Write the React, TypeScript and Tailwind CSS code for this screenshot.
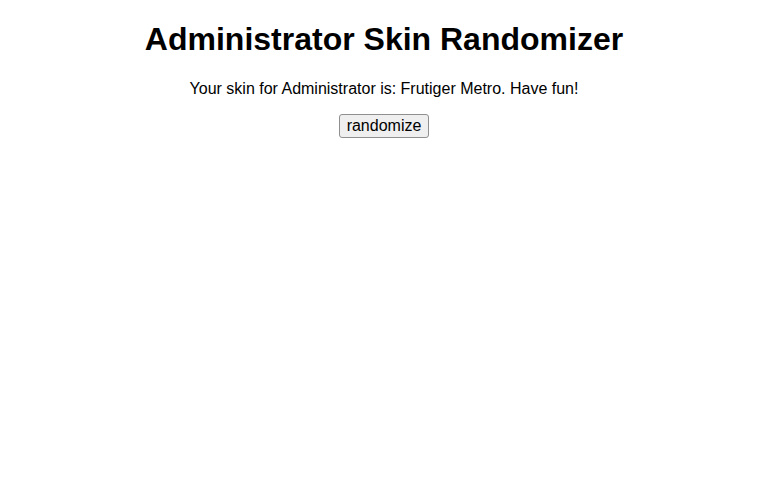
export default function App() {
  return (
    <div className="min-h-[480px] bg-white text-center text-black font-['Liberation_Sans',Arial,sans-serif] pt-[21.44px]">
      <h1 className="text-[32px] leading-[normal] font-bold mb-[21.44px]">Administrator Skin Randomizer</h1>
      <p className="text-base leading-[normal] mb-4">Your skin for Administrator is: Frutiger Metro. Have fun!</p>
      <button
        type="button"
        className="text-base leading-[normal] bg-[#efefef] border border-[#8f8f8f] rounded-[3px] px-[7px] py-[2px] text-black hover:bg-[#e5e5e5]"
      >
        randomize
      </button>
    </div>
  );
}
